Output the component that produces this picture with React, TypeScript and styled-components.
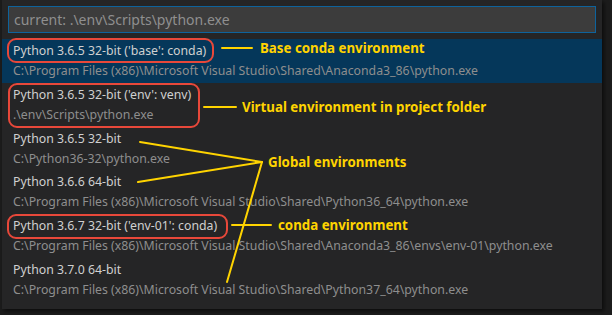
import React, { FC } from "react"
import styled, { createGlobalStyle } from "styled-components"

const GlobalStyle = createGlobalStyle`
    html, body {
        margin: 0;
        padding: 0;
        background: #1c1c1c;
        width: 612px;
        height: 315px;
        overflow: hidden;
    }
`

interface Interpreter {
    label: string
    path: string
}

const interpreters: Interpreter[] = [
    { label: "Python 3.6.5 32-bit ('base': conda)", path: "C:\\Program Files (x86)\\Microsoft Visual Studio\\Shared\\Anaconda3_86\\python.exe" },
    { label: "Python 3.6.5 32-bit ('env': venv)", path: ".\\env\\Scripts\\python.exe" },
    { label: "Python 3.6.5 32-bit", path: "C:\\Python36-32\\python.exe" },
    { label: "Python 3.6.6 64-bit", path: "C:\\Program Files (x86)\\Microsoft Visual Studio\\Shared\\Python36_64\\python.exe" },
    { label: "Python 3.6.7 32-bit ('env-01': conda)", path: "C:\\Program Files (x86)\\Microsoft Visual Studio\\Shared\\Anaconda3_86\\envs\\env-01\\python.exe" },
    { label: "Python 3.7.0 64-bit", path: "C:\\Program Files (x86)\\Microsoft Visual Studio\\Shared\\Python37_64\\python.exe" },
]

const Stage = styled.div`
    position: relative;
    width: 612px;
    height: 315px;
    padding: 0 10px 6px 2px;
    box-sizing: border-box;
    font-family: "Noto Sans", "Open Sans", sans-serif;
`

const Panel = styled.div`
    background: #252526;
    width: 600px;
    height: 309px;
    padding-top: 6px;
    box-sizing: border-box;
    box-shadow: 2px 2px 4px rgba(0, 0, 0, 0.6);
`

const InputBox = styled.div`
    margin: 0 6px 6px 6px;
    height: 27px;
    background: #3c3c3c;
    border: 1px solid #0e639c;
    box-sizing: border-box;
    display: flex;
    align-items: center;
    padding-left: 5px;
    color: #8f8f8f;
    font-size: 14px;
`

const List = styled.div`
    display: flex;
    flex-direction: column;
`

const Row = styled.div<{ $selected?: boolean }>`
    height: 43.7px;
    padding-left: 11px;
    display: flex;
    flex-direction: column;
    justify-content: center;
    gap: 3px;
    background: ${(p) => (p.$selected ? "#05375a" : "transparent")};
`

const Label = styled.div`
    color: #d0d0d0;
    font-size: 12.3px;
    line-height: 17px;
    white-space: nowrap;
`

const Path = styled.div`
    color: #8e8e8e;
    font-size: 12.3px;
    line-height: 17px;
    white-space: nowrap;
`

const Overlay = styled.svg`
    position: absolute;
    left: 0;
    top: 0;
    pointer-events: none;
`

const Note = styled.div<{ $x: number; $y: number }>`
    position: absolute;
    left: ${(p) => p.$x}px;
    top: ${(p) => p.$y}px;
    color: #ffd400;
    font-weight: 700;
    font-size: 13.3px;
    line-height: 18px;
    white-space: nowrap;
`

const InterpreterRow: FC<{ item: Interpreter; selected?: boolean }> = ({ item, selected }) => (
    <Row $selected={selected}>
        <Label>{item.label}</Label>
        <Path>{item.path}</Path>
    </Row>
)

export default function App() {
    const red = "#e8483a"
    const yellow = "#ffd400"
    return (
        <>
            <GlobalStyle />
            <Stage>
                <Panel>
                    <InputBox>current: .\env\Scripts\python.exe</InputBox>
                    <List>
                        {interpreters.map((it, i) => (
                            <InterpreterRow key={i} item={it} selected={i === 0} />
                        ))}
                    </List>
                </Panel>
                <Overlay width="612" height="315" viewBox="0 0 612 315">
                    <g fill="none" stroke={red} strokeWidth="2">
                        <rect x="8" y="39" width="205" height="23" rx="8" />
                        <rect x="9" y="84" width="190" height="43" rx="8" />
                        <rect x="8" y="215" width="219" height="23" rx="8" />
                    </g>
                    <g stroke={yellow} strokeWidth="2" strokeLinecap="round">
                        <line x1="222" y1="48" x2="252" y2="48" />
                        <line x1="204" y1="107" x2="236" y2="107" />
                        <line x1="140" y1="142" x2="262" y2="162" />
                        <line x1="138" y1="182" x2="262" y2="162" />
                        <line x1="262" y1="162" x2="227" y2="282" />
                        <line x1="232" y1="225" x2="271" y2="225" />
                    </g>
                </Overlay>
                <Note $x={260} $y={39}>Base conda environment</Note>
                <Note $x={242} $y={98}>Virtual environment in project folder</Note>
                <Note $x={268} $y={153}>Global environments</Note>
                <Note $x={278} $y={216}>conda environment</Note>
            </Stage>
        </>
    )
}
